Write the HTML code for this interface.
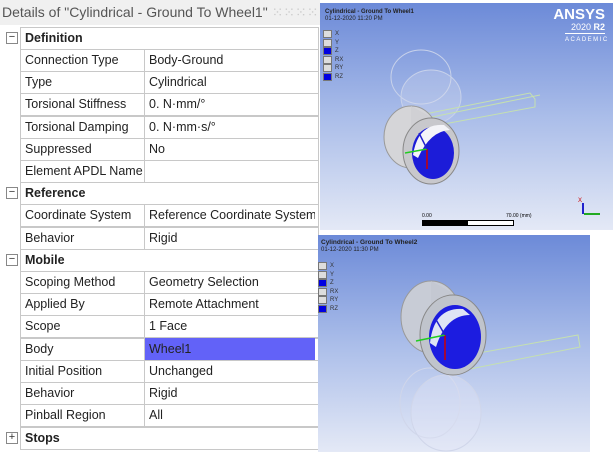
<!DOCTYPE html><html><head><style>
body{margin:0;width:613px;height:460px;background:#fff;position:relative;overflow:hidden;font-family:"Liberation Sans",sans-serif;}
.t{position:absolute;left:0;top:0;width:320px;height:25px;background:#f0f0f0;font-size:14px;color:#555;line-height:25px;padding-left:2px;box-sizing:border-box;white-space:nowrap;overflow:hidden}
.r{position:absolute;left:20px;width:299px;height:23px;border:1px solid #c8c8c8;box-sizing:border-box;font-size:12.5px;color:#222;line-height:21px;background:#fff;white-space:nowrap}
.r span{position:absolute;left:4px;top:0}
.r i{font-style:normal;position:absolute;left:123px;top:-1px;height:23px;line-height:23px;border-left:1px solid #c8c8c8;padding-left:4px;width:171px;overflow:hidden;box-sizing:border-box}
.h{font-weight:bold}
.b{position:absolute;left:6px;width:10px;height:10px;border:1px solid #888;font-size:11px;line-height:9px;text-align:center;color:#333;background:#fff}
.vp{position:absolute;background:linear-gradient(#6c8ad8,#aabde9 50%,#e4e9f6);overflow:hidden}
.lg{position:absolute;font-size:6px;color:#333}
.lg div{height:8.5px;display:flex;align-items:center}
.lg b{display:inline-block;width:7px;height:6px;background:#ddd;border:1px solid #777;margin-right:3px}
.lg b.z{background:#0000e0}
</style></head><body>
<div class="t">Details of "Cylindrical - Ground To Wheel1" <span style="color:#ccc">⁙⁙⁙⁙⁙⁙⁙⁙⁙⁙</span></div>
<div class="b" style="top:32px">−</div>
<div class="r h" style="top:27px"><span>Definition</span></div>
<div class="r" style="top:49px"><span>Connection Type</span><i>Body-Ground</i></div>
<div class="r" style="top:71px"><span>Type</span><i>Cylindrical</i></div>
<div class="r" style="top:93px"><span>Torsional Stiffness</span><i>0. N·mm/°</i></div>
<div class="r" style="top:116px"><span>Torsional Damping</span><i>0. N·mm·s/°</i></div>
<div class="r" style="top:138px"><span>Suppressed</span><i>No</i></div>
<div class="r" style="top:160px"><span>Element APDL Name</span><i></i></div>
<div class="b" style="top:187px">−</div>
<div class="r h" style="top:182px"><span>Reference</span></div>
<div class="r" style="top:204px"><span>Coordinate System</span><i>Reference Coordinate System</i></div>
<div class="r" style="top:227px"><span>Behavior</span><i>Rigid</i></div>
<div class="b" style="top:254px">−</div>
<div class="r h" style="top:249px"><span>Mobile</span></div>
<div class="r" style="top:271px"><span>Scoping Method</span><i>Geometry Selection</i></div>
<div class="r" style="top:293px"><span>Applied By</span><i>Remote Attachment</i></div>
<div class="r" style="top:315px"><span>Scope</span><i>1 Face</i></div>
<div class="r" style="top:338px"><span>Body</span><i style="background:#6262f8">Wheel1</i></div>
<div class="r" style="top:360px"><span>Initial Position</span><i>Unchanged</i></div>
<div class="r" style="top:382px"><span>Behavior</span><i>Rigid</i></div>
<div class="r" style="top:404px"><span>Pinball Region</span><i>All</i></div>
<div class="b" style="top:432px">+</div>
<div class="r h" style="top:427px"><span>Stops</span></div>

<div class="vp" style="left:320px;top:3px;width:293px;height:227px">
<div style="position:absolute;left:5px;top:6px;font-size:6px;color:#222;font-weight:bold">Cylindrical - Ground To Wheel1</div>
<div style="position:absolute;left:5px;top:13px;font-size:6px;color:#222">01-12-2020 11:20 PM</div>
<div style="position:absolute;right:8px;top:3px;color:#fff;font-weight:bold;font-size:15px">ANSYS</div>
<div style="position:absolute;right:8px;top:19px;color:#fff;font-size:9px">2020 <b>R2</b></div>
<div style="position:absolute;right:8px;top:30px;width:40px;border-top:1px solid #fff;color:#fff;font-size:6px;letter-spacing:1.5px;padding-top:3px">ACADEMIC</div>
<div class="lg" style="left:3px;top:27px"><div><b></b>X</div><div><b></b>Y</div><div><b class="z"></b>Z</div><div><b></b>RX</div><div><b></b>RY</div><div><b class="z"></b>RZ</div></div>
<svg width="293" height="227" style="position:absolute;left:0;top:0">
<ellipse cx="101" cy="74" rx="30" ry="27" fill="none" stroke="#c8d2ea"/>
<ellipse cx="111" cy="94" rx="30" ry="27" fill="rgba(220,225,240,.25)" stroke="#c8d2ea"/>
<path d="M100 112 L210 90 L215 96 L215 104 L108 124" fill="none" stroke="#c5e0b0"/>
<path d="M220 92 L112 114" stroke="#c5e0b0" fill="none"/>
<g transform="translate(6,0)">
<ellipse cx="85" cy="134" rx="27" ry="31" fill="#d5d5d8" stroke="#999"/>
<polygon points="85,103 105,114 105,180 85,165" fill="#d0d0d4"/>
<ellipse cx="105" cy="148" rx="28" ry="33" fill="#c8c8cc" stroke="#888"/>
<ellipse cx="107" cy="150" rx="21" ry="26" fill="#1c1cd8"/>
<path d="M87 152 Q92 120 118 122 L124 127 Q104 128 92 155Z" fill="#f4f4f8"/>
<line x1="101" y1="146" x2="101" y2="166" stroke="#c00" stroke-width="1.5"/>
<line x1="101" y1="146" x2="79" y2="150" stroke="#2c2" stroke-width="1.5"/>
<line x1="101" y1="146" x2="93" y2="130" stroke="#22c" stroke-width="1.5"/>
</g>
</svg>
<div style="position:absolute;left:102px;top:210px;font-size:5px">0.00</div>
<div style="position:absolute;left:186px;top:210px;font-size:5px">70.00 (mm)</div>
<div style="position:absolute;left:102px;top:217px;width:90px;height:4px;border:1px solid #000;background:linear-gradient(90deg,#000 50%,#fff 50%)"></div>
<div style="position:absolute;left:258px;top:195px;font-size:6px;color:#c00">X</div>
<div style="position:absolute;left:264px;top:210px;width:16px;height:1.5px;background:#2a2"></div>
<div style="position:absolute;left:262px;top:200px;width:2px;height:11px;background:#22c"></div>
</div>

<div class="vp" style="left:318px;top:235px;width:272px;height:217px">
<div style="position:absolute;left:3px;top:4px;font-size:6.5px;color:#222;font-weight:bold">Cylindrical - Ground To Wheel2</div>
<div style="position:absolute;left:3px;top:12px;font-size:6px;color:#222">01-12-2020 11:30 PM</div>
<div class="lg" style="left:0;top:27px"><div><b></b>X</div><div><b></b>Y</div><div><b class="z"></b>Z</div><div><b></b>RX</div><div><b></b>RY</div><div><b class="z"></b>RZ</div></div>
<svg width="272" height="217" style="position:absolute;left:0;top:0">
<ellipse cx="112" cy="168" rx="30" ry="35" fill="none" stroke="#d0d6ea"/>
<ellipse cx="128" cy="178" rx="35" ry="38" fill="rgba(225,230,245,.35)" stroke="#d0d6ea"/>
<path d="M150 120 L260 100 L262 112 L152 134" fill="none" stroke="#c5e0b0"/>
<ellipse cx="113" cy="82" rx="30" ry="36" fill="#c8ccd6" stroke="#999"/>
<polygon points="113,46 135,58 135,140 113,118" fill="#c4c8d2"/>
<ellipse cx="135" cy="100" rx="33" ry="40" fill="#c0c4cc" stroke="#888"/>
<ellipse cx="137" cy="102" rx="26" ry="32" fill="#1c1ce0"/>
<path d="M112 108 Q116 72 145 74 L152 80 Q128 80 118 112Z" fill="#dfe4f4"/>
<line x1="127" y1="100" x2="127" y2="125" stroke="#c00" stroke-width="1.5"/>
<line x1="127" y1="100" x2="98" y2="106" stroke="#2c2" stroke-width="1.5"/>
<line x1="127" y1="100" x2="117" y2="83" stroke="#22c" stroke-width="1.5"/>
</svg>
</div>
</body></html>
